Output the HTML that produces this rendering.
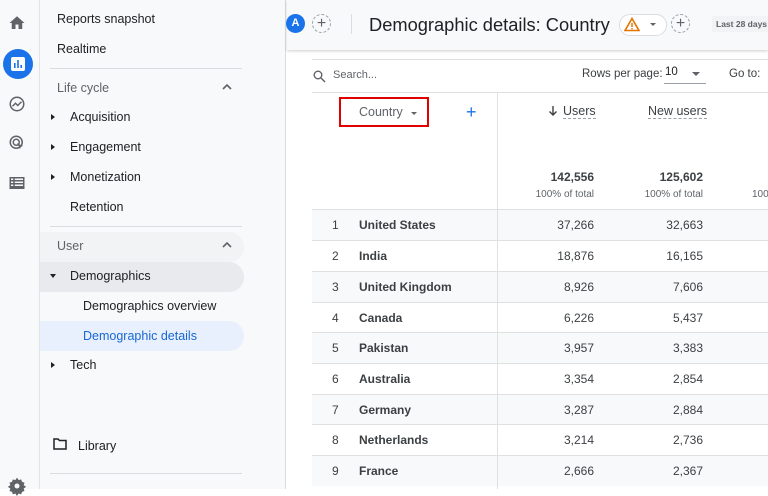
<!DOCTYPE html>
<html><head><style>
*{box-sizing:border-box;margin:0;padding:0}
body{width:768px;height:489px;overflow:hidden;background:#fff;font-family:"Liberation Sans",Arial,sans-serif;position:relative;color:#202124}
.rail{position:absolute;left:0;top:0;width:40px;height:489px;background:#f8f9fa;border-right:1px solid #e3e3e3}
.side{position:absolute;left:40px;top:0;width:246px;height:489px;background:#f8f9fa;border-right:1px solid #dadce0}
.it{position:absolute;font-size:12.5px;color:#202124;white-space:nowrap}
.gr{color:#5f6368}
.hr{position:absolute;left:10px;width:192px;height:1px;background:#dadce0}
.tri{position:absolute;left:11px;width:0;height:0;border-top:3px solid transparent;border-bottom:3px solid transparent;border-left:4px solid #202124}
.top{position:absolute;left:287px;top:0;width:481px;height:50px;background:#f8f9fa;box-shadow:0 1px 3px rgba(0,0,0,.2)}
.row{position:absolute;left:312px;width:456px;height:31px;border-top:1px solid #e0e0e0;font-size:12px}
.row span{position:absolute;top:8px}
.n{left:20px;color:#3c4043}.c{left:47px;font-weight:bold;color:#3c4043}
.u{right:174px;color:#3c4043}.nu{right:65px;color:#3c4043}
</style></head><body>
<div class="rail">
<svg style="position:absolute;left:8px;top:14px" width="18" height="18" viewBox="0 0 24 24"><path d="M10 20v-6h4v6h5v-8h3L12 3 2 12h3v8z" fill="#5f6368"/></svg>
<div style="position:absolute;left:3px;top:49px;width:30px;height:30px;border-radius:50%;background:#1a73e8"></div>
<svg style="position:absolute;left:10px;top:56px" width="16" height="16" viewBox="0 0 16 16"><rect x="1" y="1" width="14" height="14" rx="2" fill="#fff"/><rect x="4" y="7" width="1.6" height="5" fill="#1a73e8"/><rect x="7.2" y="4" width="1.6" height="8" fill="#1a73e8"/><rect x="10.4" y="9" width="1.6" height="3" fill="#1a73e8"/></svg>
<svg style="position:absolute;left:8px;top:95px" width="18" height="18" viewBox="0 0 24 24"><circle cx="12" cy="12" r="9" fill="none" stroke="#5f6368" stroke-width="2"/><path d="M6 15l4-4 3 3 5-5" fill="none" stroke="#5f6368" stroke-width="2"/></svg>
<svg style="position:absolute;left:8px;top:134px" width="18" height="18" viewBox="0 0 24 24"><circle cx="11" cy="11" r="8" fill="none" stroke="#5f6368" stroke-width="2"/><circle cx="11" cy="11" r="4" fill="none" stroke="#5f6368" stroke-width="2"/><path d="M12 12l8 4-3 1-1 3z" fill="#5f6368"/></svg>
<svg style="position:absolute;left:8px;top:174px" width="18" height="18" viewBox="0 0 24 24"><path d="M3 5h18v14H3z M3 9h18M3 13h18M3 17h18M8 5v14" fill="none" stroke="#5f6368" stroke-width="2"/></svg>
<svg style="position:absolute;left:7px;top:476px" width="20" height="20" viewBox="0 0 24 24"><path d="M12 2l2 3 3-1 1 3 3 1-1 3 3 2-3 2 1 3-3 1-1 3-3-1-2 3-2-3-3 1-1-3-3-1 1-3-3-2 3-2-1-3 3-1 1-3 3 1z" fill="#5f6368"/><circle cx="12" cy="12" r="3" fill="#f8f9fa"/></svg>
</div>
<div class="side">
<div class="it" style="left:17px;top:12px">Reports snapshot</div>
<div class="it" style="left:17px;top:42px">Realtime</div>
<div class="hr" style="top:68px"></div>
<div class="it gr" style="left:17px;top:81px">Life cycle</div>
<svg style="position:absolute;left:181px;top:83px" width="12" height="8"><path d="M2 6l4-4 4 4" fill="none" stroke="#5f6368" stroke-width="1.6"/></svg>
<div class="tri" style="top:114px"></div><div class="it" style="left:30px;top:110px">Acquisition</div>
<div class="tri" style="top:144px"></div><div class="it" style="left:30px;top:140px">Engagement</div>
<div class="tri" style="top:174px"></div><div class="it" style="left:30px;top:170px">Monetization</div>
<div class="it" style="left:30px;top:200px">Retention</div>
<div class="hr" style="top:226px"></div>
<div style="position:absolute;left:0;top:232px;width:204px;height:30px;background:#f1f3f4;border-radius:0 15px 15px 0"></div>
<div class="it gr" style="left:17px;top:239px">User</div>
<svg style="position:absolute;left:181px;top:241px" width="12" height="8"><path d="M2 6l4-4 4 4" fill="none" stroke="#5f6368" stroke-width="1.6"/></svg>
<div style="position:absolute;left:0;top:262px;width:204px;height:30px;background:#e8eaed;border-radius:0 15px 15px 0"></div>
<div style="position:absolute;left:10px;top:274px;border-left:3px solid transparent;border-right:3px solid transparent;border-top:4px solid #202124"></div>
<div class="it" style="left:30px;top:269px">Demographics</div>
<div class="it" style="left:43px;top:299px">Demographics overview</div>
<div style="position:absolute;left:0;top:321px;width:204px;height:30px;background:#e8f0fe;border-radius:0 15px 15px 0"></div>
<div class="it" style="left:43px;top:329px;color:#1967d2">Demographic details</div>
<div class="tri" style="top:362px"></div><div class="it" style="left:30px;top:358px">Tech</div>
<svg style="position:absolute;left:13px;top:438px" width="14" height="12" viewBox="0 0 14 12"><path d="M1 1h4l1.5 1.5H13V11H1z" fill="none" stroke="#202124" stroke-width="1.5"/></svg>
<div class="it" style="left:38px;top:439px">Library</div>
<div class="hr" style="top:473px;width:192px"></div>
</div>
<div class="top">
<div style="position:absolute;left:-1px;top:14px;width:19px;height:19px;border-radius:50%;background:#1a73e8;color:#fff;font-size:11px;font-weight:bold;text-align:center;line-height:19px">A</div>
<div style="position:absolute;left:25px;top:14px;width:19px;height:19px;border-radius:50%;border:1px dashed #9aa0a6;color:#5f6368;font-size:16px;text-align:center;line-height:17px">+</div>
<div style="position:absolute;left:64px;top:14px;width:1px;height:20px;background:#dadce0"></div>
<div style="position:absolute;left:82px;top:14px;font-size:18.3px;color:#202124;white-space:nowrap">Demographic details: Country</div>
<div style="position:absolute;left:332px;top:14px;width:48px;height:22px;border-radius:11px;border:1px solid #dadce0;background:#fff"></div>
<svg style="position:absolute;left:337px;top:17px" width="16" height="15" viewBox="0 0 16 15"><path d="M8 1.5L15 13.5H1z" fill="none" stroke="#e37400" stroke-width="1.6"/><path d="M8 6v4M8 11v1.3" stroke="#e37400" stroke-width="1.5"/></svg>
<div style="position:absolute;left:363px;top:23px;border-left:3px solid transparent;border-right:3px solid transparent;border-top:3px solid #5f6368"></div>
<div style="position:absolute;left:384px;top:14px;width:19px;height:19px;border-radius:50%;border:1px dashed #9aa0a6;color:#5f6368;font-size:16px;text-align:center;line-height:17px">+</div>
<div style="position:absolute;left:425px;top:16px;height:16px;padding:0 4px;background:#f1f3f4;font-size:8.5px;font-weight:bold;color:#5f6368;line-height:16px;white-space:nowrap">Last 28 days</div>
</div>
<div style="position:absolute;left:312px;top:59px;width:456px;height:1px;background:#e0e0e0"></div>
<svg style="position:absolute;left:313px;top:70px" width="13" height="13" viewBox="0 0 13 13"><circle cx="5" cy="5" r="3.8" fill="none" stroke="#5f6368" stroke-width="1.4"/><path d="M8 8l4 4" stroke="#5f6368" stroke-width="1.5"/></svg>
<div style="position:absolute;left:333px;top:69px;font-size:11px;color:#5f6368">Search...</div>
<div style="position:absolute;left:582px;top:68px;font-size:11.5px;color:#3c4043;white-space:nowrap">Rows per page:</div>
<div style="position:absolute;left:665px;top:66px;font-size:11.5px;color:#202124">10</div>
<div style="position:absolute;left:692px;top:72px;border-left:4px solid transparent;border-right:4px solid transparent;border-top:4px solid #5f6368"></div>
<div style="position:absolute;left:664px;top:83px;width:42px;height:1px;background:#9aa0a6"></div>
<div style="position:absolute;left:729px;top:68px;font-size:11.5px;color:#3c4043">Go to:</div>
<div style="position:absolute;left:312px;top:92px;width:456px;height:1px;background:#e0e0e0"></div>
<div style="position:absolute;left:339px;top:97px;width:90px;height:30px;border:2px solid #e00000"></div>
<div style="position:absolute;left:359px;top:105px;font-size:12.5px;color:#5f6368">Country</div>
<div style="position:absolute;left:411px;top:112px;border-left:3px solid transparent;border-right:3px solid transparent;border-top:3px solid #5f6368"></div>
<div style="position:absolute;left:466px;top:102px;font-size:18px;color:#1a73e8">+</div>
<svg style="position:absolute;left:548px;top:105px" width="10" height="12" viewBox="0 0 10 12"><path d="M5 1v9M1.5 6.5L5 10l3.5-3.5" fill="none" stroke="#3c4043" stroke-width="1.4"/></svg>
<div style="position:absolute;left:563px;top:104px;font-size:12.5px;color:#3c4043;border-bottom:1px dashed #9aa0a6">Users</div>
<div style="position:absolute;left:648px;top:104px;font-size:12.5px;color:#3c4043;border-bottom:1px dashed #9aa0a6">New users</div>
<div style="position:absolute;right:174px;top:170px;font-size:12px;font-weight:bold;color:#3c4043">142,556</div>
<div style="position:absolute;right:174px;top:189px;font-size:10px;color:#5f6368">100% of total</div>
<div style="position:absolute;right:65px;top:170px;font-size:12px;font-weight:bold;color:#3c4043">125,602</div>
<div style="position:absolute;right:65px;top:189px;font-size:10px;color:#5f6368">100% of total</div>
<div style="position:absolute;left:752px;top:189px;font-size:10px;color:#5f6368">100</div>
<div class="row" style="top:209px;background:#f8f9fa"><span class="n">1</span><span class="c">United States</span><span class="u">37,266</span><span class="nu">32,663</span></div>
<div class="row" style="top:240px"><span class="n">2</span><span class="c">India</span><span class="u">18,876</span><span class="nu">16,165</span></div>
<div class="row" style="top:271px;background:#f8f9fa"><span class="n">3</span><span class="c">United Kingdom</span><span class="u">8,926</span><span class="nu">7,606</span></div>
<div class="row" style="top:302px"><span class="n">4</span><span class="c">Canada</span><span class="u">6,226</span><span class="nu">5,437</span></div>
<div class="row" style="top:332px;background:#f8f9fa"><span class="n">5</span><span class="c">Pakistan</span><span class="u">3,957</span><span class="nu">3,383</span></div>
<div class="row" style="top:363px"><span class="n">6</span><span class="c">Australia</span><span class="u">3,354</span><span class="nu">2,854</span></div>
<div class="row" style="top:394px;background:#f8f9fa"><span class="n">7</span><span class="c">Germany</span><span class="u">3,287</span><span class="nu">2,884</span></div>
<div class="row" style="top:424px"><span class="n">8</span><span class="c">Netherlands</span><span class="u">3,214</span><span class="nu">2,736</span></div>
<div class="row" style="top:455px;background:#f8f9fa"><span class="n">9</span><span class="c">France</span><span class="u">2,666</span><span class="nu">2,367</span></div>
<div style="position:absolute;left:497px;top:93px;width:1px;height:396px;background:#e0e0e0"></div>
</body></html>
